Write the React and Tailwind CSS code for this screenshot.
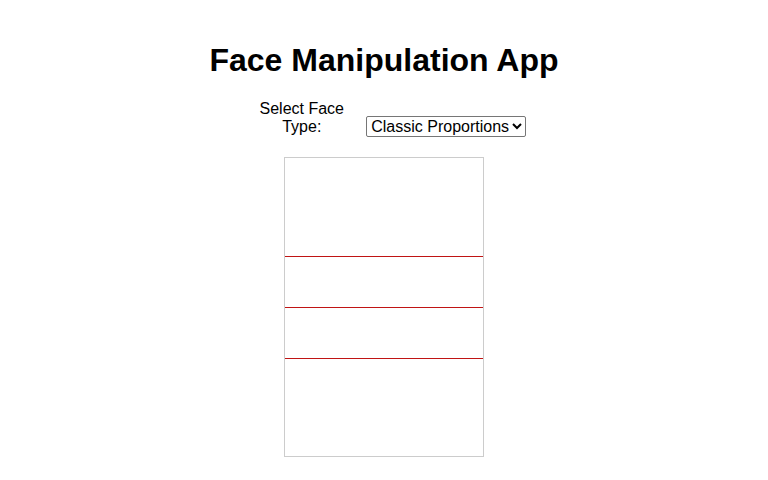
import { useState } from 'react';

const FACE_TYPES = ['Classic Proportions', 'Long Face', 'Round Face', 'Square Face'];

// horizontal guide lines inside the face canvas (content px)
const GUIDES = [98, 149, 200];

const FaceCanvas = () => (
  <div className="w-[200px] h-[300px] border border-[#cccccc] mt-[20px] bg-white">
    <svg width="198" height="298" viewBox="0 0 198 298" className="block" shapeRendering="crispEdges">
      {GUIDES.map((y) => (
        <rect key={y} x="0" y={y} width="198" height="1" fill="#c01414" />
      ))}
    </svg>
  </div>
);

const App = () => {
  const [faceType, setFaceType] = useState(FACE_TYPES[0]);

  return (
    <div
      className="min-h-[480px] bg-white text-black flex flex-col items-center pt-[21px]"
      style={{ fontFamily: '"Liberation Sans", Arial, sans-serif' }}
    >
      <h1 className="text-[32px] leading-[37px] font-bold mt-[21px] mb-[21px]">Face Manipulation App</h1>
      <div className="text-center text-[16px] leading-[18px]">
        <label htmlFor="face-type" className="inline-block w-[120px] text-center">
          Select Face Type:
        </label>{' '}
        <select
          id="face-type"
          value={faceType}
          onChange={(e) => setFaceType(e.target.value)}
          className="w-[160px] h-[21px] text-[16px] border border-[#767676] rounded-[2px] bg-white text-black"
        >
          {FACE_TYPES.map((t) => (
            <option key={t} value={t}>{t}</option>
          ))}
        </select>
      </div>
      <FaceCanvas />
    </div>
  );
};

export default App;
